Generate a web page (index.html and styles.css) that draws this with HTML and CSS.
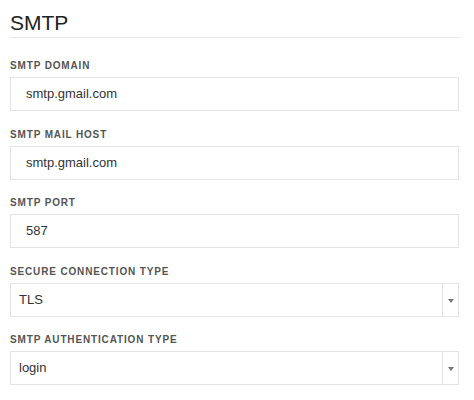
FILE: index.html
```html
<!DOCTYPE html>
<html>
<head>
<meta charset="utf-8">
<link rel="stylesheet" href="styles.css">
</head>
<body>
<div class="panel">
  <h2 class="title">SMTP</h2>
  <div class="field">
    <label class="label">SMTP Domain</label>
    <div class="input">smtp.gmail.com</div>
  </div>
  <div class="field">
    <label class="label">SMTP Mail Host</label>
    <div class="input">smtp.gmail.com</div>
  </div>
  <div class="field">
    <label class="label">SMTP Port</label>
    <div class="input">587</div>
  </div>
  <div class="field">
    <label class="label">Secure Connection Type</label>
    <div class="select"><span class="value">TLS</span><span class="arrow"></span></div>
  </div>
  <div class="field">
    <label class="label">SMTP Authentication Type</label>
    <div class="select"><span class="value">login</span><span class="arrow"></span></div>
  </div>
</div>
</body>
</html>
```
FILE: styles.css
```css
html, body {
  margin: 0;
  padding: 0;
  background: #fff;
}
body {
  font-family: "Liberation Sans", Arial, sans-serif;
  color: #333;
}
.panel {
  width: 449px;
  padding: 10px 15px 0 10px;
}
.title {
  margin: 0;
  font-size: 21px;
  font-weight: normal;
  line-height: 26px;
  color: #222;
  padding-bottom: 1px;
  border-bottom: 1px solid #e8e8e8;
  width: 450px;
}
.field {
  display: flex;
  flex-direction: column;
}
.field:first-of-type { margin-top: 22px; }
.field + .field { margin-top: 17.5px; }
.label {
  font-size: 10px;
  font-weight: bold;
  letter-spacing: 0.85px;
  text-transform: uppercase;
  color: #555;
  line-height: 12px;
  margin-bottom: 5px;
}
.input, .select {
  box-sizing: border-box;
  height: 34px;
  border: 1px solid #e3e3e3;
  font-size: 13px;
  line-height: 32px;
  color: #333;
}
.input {
  padding-left: 15px;
}
.select {
  display: flex;
}
.select .value {
  flex: 1;
  padding-left: 8px;
}
.select .arrow {
  width: 15px;
  border-left: 1px solid #e3e3e3;
  position: relative;
}
.select .arrow::after {
  content: "";
  position: absolute;
  left: 5px;
  top: 15px;
  border-left: 3px solid transparent;
  border-right: 3px solid transparent;
  border-top: 4px solid #777;
}
```
